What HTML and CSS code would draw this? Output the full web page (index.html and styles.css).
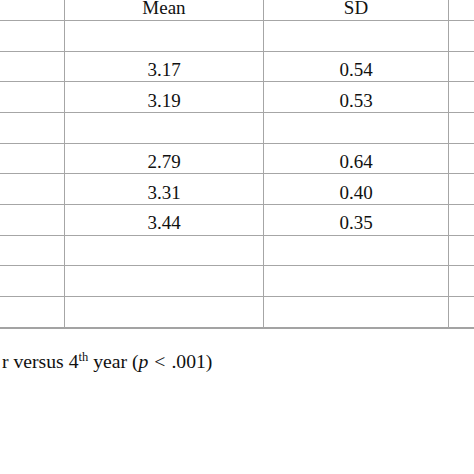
FILE: index.html
```html
<!DOCTYPE html>
<html>
<head>
<meta charset="utf-8">
<link rel="stylesheet" href="styles.css">
</head>
<body>
<div class="page">
  <div class="grid">
    <div class="cell first head"></div><div class="cell head">Mean</div><div class="cell head">SD</div><div class="cell head"></div>
    <div class="cell first"></div><div class="cell"></div><div class="cell"></div><div class="cell"></div>
    <div class="cell first"></div><div class="cell">3.17</div><div class="cell">0.54</div><div class="cell"></div>
    <div class="cell first"></div><div class="cell">3.19</div><div class="cell">0.53</div><div class="cell"></div>
    <div class="cell first"></div><div class="cell"></div><div class="cell"></div><div class="cell"></div>
    <div class="cell first"></div><div class="cell">2.79</div><div class="cell">0.64</div><div class="cell"></div>
    <div class="cell first"></div><div class="cell">3.31</div><div class="cell">0.40</div><div class="cell"></div>
    <div class="cell first"></div><div class="cell">3.44</div><div class="cell">0.35</div><div class="cell"></div>
    <div class="cell first"></div><div class="cell"></div><div class="cell"></div><div class="cell"></div>
    <div class="cell first"></div><div class="cell"></div><div class="cell"></div><div class="cell"></div>
    <div class="cell first last"></div><div class="cell last"></div><div class="cell last"></div><div class="cell last"></div>
  </div>
  <p class="note">r versus 4<sup class="sup">th</sup> year (<i>p</i> <span class="lt">&lt;</span> .001)</p>
</div>
</body>
</html>
```
FILE: styles.css
```css
html, body {
  margin: 0;
  padding: 0;
  background: #ffffff;
}
.page {
  width: 474px;
  height: 474px;
  overflow: hidden;
  font-family: "Liberation Serif", "Times New Roman", serif;
  color: #111111;
  font-size: 19px;
}
.grid {
  display: grid;
  grid-template-columns: 64px 199px 185px 1fr;
  grid-template-rows: 21.2px repeat(9, 30.65px) 31.65px;
}
.cell {
  box-sizing: border-box;
  border-bottom: 1px solid #a6a6a6;
  border-left: 1px solid #a6a6a6;
  display: flex;
  align-items: flex-end;
  justify-content: center;
  line-height: 19px;
  padding-bottom: 2.4px;
}
.cell.head {
  line-height: 16px;
  padding-bottom: 3.9px;
}
.cell.first {
  border-left: none;
}
.cell.last {
  border-bottom: 2px solid #a3a3a3;
  padding-bottom: 3.4px;
}
.note {
  margin: 22px 0 0 2px;
  font-size: 19.7px;
  line-height: 20px;
  white-space: nowrap;
}
.lt {
  margin: 0 1px;
}
.sup {
  font-size: 12.5px;
  vertical-align: 7px;
  line-height: 0;
}
```
